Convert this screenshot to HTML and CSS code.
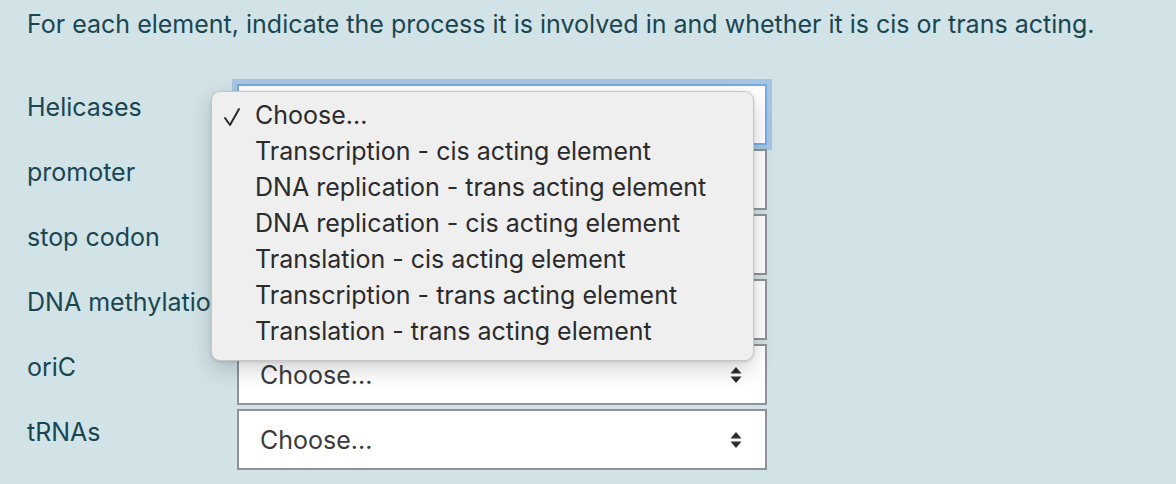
FILE: index.html
```html
<!DOCTYPE html>
<html lang="en">
<head>
<meta charset="utf-8">
<title>Cis / trans elements</title>
<link rel="stylesheet" href="styles.css">
</head>
<body>
<div class="page">
  <p class="prompt">For each element, indicate the process it is involved in and whether it is cis or trans acting.</p>
  <div class="rows">
    <div class="row">
      <span class="label">Helicases</span>
      <div class="select focused"><span class="value">Choose...</span><svg class="arrows" width="12" height="18" viewBox="0 0 12 18"><path d="M6 1 L11.5 7.5 H0.5 Z M6 17 L11.5 10.5 H0.5 Z" fill="#2e2e2e"/></svg></div>
    </div>
    <div class="row">
      <span class="label">promoter</span>
      <div class="select"><span class="value">Choose...</span><svg class="arrows" width="12" height="18" viewBox="0 0 12 18"><path d="M6 1 L11.5 7.5 H0.5 Z M6 17 L11.5 10.5 H0.5 Z" fill="#2e2e2e"/></svg></div>
    </div>
    <div class="row">
      <span class="label">stop codon</span>
      <div class="select"><span class="value">Choose...</span><svg class="arrows" width="12" height="18" viewBox="0 0 12 18"><path d="M6 1 L11.5 7.5 H0.5 Z M6 17 L11.5 10.5 H0.5 Z" fill="#2e2e2e"/></svg></div>
    </div>
    <div class="row">
      <span class="label">DNA methylation</span>
      <div class="select"><span class="value">Choose...</span><svg class="arrows" width="12" height="18" viewBox="0 0 12 18"><path d="M6 1 L11.5 7.5 H0.5 Z M6 17 L11.5 10.5 H0.5 Z" fill="#2e2e2e"/></svg></div>
    </div>
    <div class="row">
      <span class="label">oriC</span>
      <div class="select"><span class="value">Choose...</span><svg class="arrows" width="12" height="18" viewBox="0 0 12 18"><path d="M6 1 L11.5 7.5 H0.5 Z M6 17 L11.5 10.5 H0.5 Z" fill="#2e2e2e"/></svg></div>
    </div>
    <div class="row">
      <span class="label">tRNAs</span>
      <div class="select"><span class="value">Choose...</span><svg class="arrows" width="12" height="18" viewBox="0 0 12 18"><path d="M6 1 L11.5 7.5 H0.5 Z M6 17 L11.5 10.5 H0.5 Z" fill="#2e2e2e"/></svg></div>
    </div>
  </div>
  <ul class="menu">
    <li class="opt checked"><svg class="check" width="18" height="20" viewBox="0 0 18 20"><path d="M2 11 L7 18 L16 2" fill="none" stroke="#2b2b2b" stroke-width="2" stroke-linecap="round" stroke-linejoin="round"/></svg>Choose...</li>
    <li class="opt">Transcription - cis acting element</li>
    <li class="opt">DNA replication - trans acting element</li>
    <li class="opt">DNA replication - cis acting element</li>
    <li class="opt">Translation - cis acting element</li>
    <li class="opt">Transcription - trans acting element</li>
    <li class="opt">Translation - trans acting element</li>
  </ul>
</div>
</body>
</html>
```

FILE: styles.css
```css
html, body {
  margin: 0;
  padding: 0;
  background: #d1e3e7;
}
body {
  font-family: Inter, "Liberation Sans", sans-serif;
  color: #1a4651;
}
.page {
  position: relative;
  padding: 0 27px;
  height: 484px;
  overflow: hidden;
}
.prompt {
  margin: 0;
  padding-top: 9px;
  font-size: 25px;
  line-height: 30px;
  white-space: nowrap;
}
.rows {
  display: flex;
  flex-direction: column;
  gap: 4px;
  margin-top: 45px;
}
.row {
  display: flex;
  align-items: flex-start;
}
.label {
  width: 210px;
  flex: none;
  font-size: 25px;
  line-height: 30px;
  padding-top: 8px;
  white-space: nowrap;
}
.select {
  box-sizing: border-box;
  width: 530px;
  height: 61px;
  border: 2px solid #8f9399;
  background: #ffffff;
  display: flex;
  align-items: center;
  justify-content: space-between;
  padding: 0 23px 0 21px;
  color: #3b3b3b;
  font-size: 25px;
}
.select.focused {
  border-color: #77abe6;
  box-shadow: 0 0 0 5px #a7c6e3;
}
.arrows {
  display: block;
}
.menu {
  position: absolute;
  left: 211px;
  top: 91px;
  width: 543px;
  box-sizing: border-box;
  margin: 0;
  padding: 5px 0 11px;
  list-style: none;
  background: #efefef;
  border: 1px solid #c6c6c6;
  border-radius: 9px;
  box-shadow: 0 8px 22px rgba(0, 0, 0, 0.18), 0 1px 3px rgba(0, 0, 0, 0.12);
  color: #2b2b2b;
}
.opt {
  position: relative;
  height: 36px;
  line-height: 36px;
  padding-left: 43px;
  font-size: 25px;
  white-space: nowrap;
}
.check {
  position: absolute;
  left: 11px;
  top: 10px;
}
```
